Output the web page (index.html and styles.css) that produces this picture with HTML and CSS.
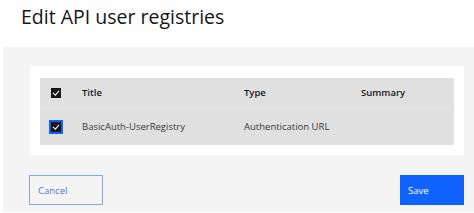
FILE: index.html
```html
<!DOCTYPE html>
<html lang="en">
<head>
    <meta charset="utf-8" />
    <link rel="stylesheet" href="styles.css">
    <title>Edit API user registries</title>
</head>
<body>
    <h1 class="pagetitle">Edit API user registries</h1>
    <div class="panel">
        <div class="card">
            <div class="regtable">
                <div class="row headrow">
                    <div class="cell checkcell"><span class="check"></span></div>
                    <div class="cell titlecell">Title</div>
                    <div class="cell typecell">Type</div>
                    <div class="cell">Summary</div>
                </div>
                <div class="row bodyrow">
                    <div class="cell checkcell"><span class="check focused"></span></div>
                    <div class="cell titlecell">BasicAuth-UserRegistry</div>
                    <div class="cell typecell">Authentication URL</div>
                    <div class="cell"></div>
                </div>
            </div>
        </div>
        <div class="actions">
            <button class="btn cancelbtn">Cancel</button>
            <button class="btn savebtn">Save</button>
        </div>
    </div>
</body>
</html>
```

FILE: styles.css
```css
body {
    margin: 0;
    background-color: #ffffff;
    font-family: "Open Sans", "Noto Sans", sans-serif;
    color: #161616;
}
.pagetitle {
    margin: 0;
    height: 47px;
    padding-left: 21px;
    font-size: 19.5px;
    font-weight: 400;
    line-height: 33px;
    box-sizing: border-box;
}
.panel {
    margin-left: 3px;
    height: 165px;
    background-color: #f4f4f4;
    padding: 19px 10px 0 27px;
    box-sizing: border-box;
}
.card {
    width: 434px;
    background-color: #ffffff;
    padding: 12px 10px 10px 10px;
    box-sizing: border-box;
}
.regtable {
    background-color: #e0e0e0;
}
.row {
    display: flex;
    align-items: center;
}
.headrow {
    height: 29px;
    font-weight: 600;
    font-size: 9.5px;
    border-bottom: 1px solid #e8e8e8;
}
.bodyrow {
    height: 37px;
    font-size: 9.5px;
    color: #393939;
}
.checkcell {
    width: 42px;
    padding-left: 11px;
    box-sizing: border-box;
    display: flex;
}
.titlecell {
    width: 162px;
}
.typecell {
    width: 117px;
}
.check {
    width: 10px;
    height: 10px;
    background-color: #161616;
    position: relative;
    display: inline-block;
}
.check::after {
    content: "";
    position: absolute;
    left: 3px;
    top: 1.5px;
    width: 2.5px;
    height: 5px;
    border-right: 1.5px solid #ffffff;
    border-bottom: 1.5px solid #ffffff;
    transform: rotate(40deg);
}
.focused {
    outline: 2px solid #0f62fe;
    outline-offset: 0px;
}
.actions {
    display: flex;
    justify-content: space-between;
    margin-top: 20px;
    padding-left: 0px;
    margin-left: -1px;
}
.btn {
    height: 30px;
    font-family: "Open Sans", "Noto Sans", sans-serif;
    font-size: 9.5px;
    text-align: left;
    padding: 0 0 0 8px;
    border-radius: 0;
    cursor: pointer;
}
.cancelbtn {
    width: 74px;
    background-color: transparent;
    border: 1px solid #8aa6e8;
    color: #4f78d8;
}
.savebtn {
    width: 64px;
    background-color: #0f62fe;
    border: none;
    color: #ffffff;
}
```
